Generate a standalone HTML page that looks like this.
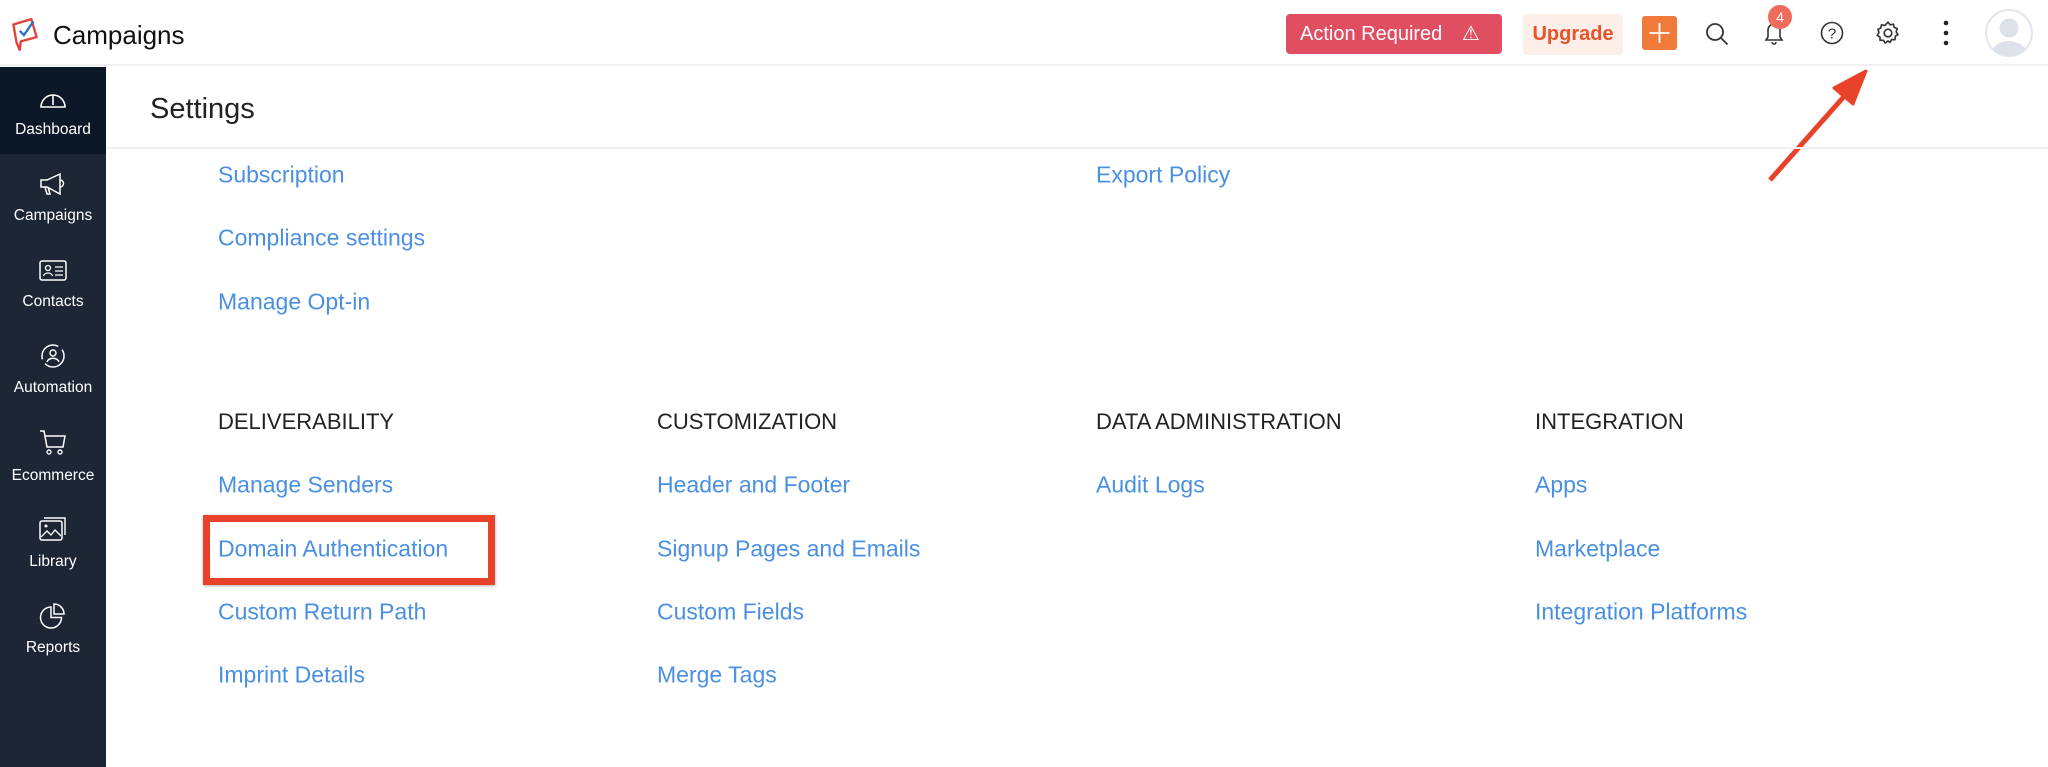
<!DOCTYPE html>
<html><head><meta charset="utf-8"><style>
*{margin:0;padding:0;box-sizing:border-box}
body{width:2048px;height:767px;background:#fff;font-family:"Liberation Sans",sans-serif;position:relative;overflow:hidden}
.hdr{position:absolute;left:0;top:0;width:2048px;height:66px;background:#fff;border-bottom:2px solid #eef0f2}
.side{position:absolute;left:0;top:67px;width:106px;height:700px;background:#1c2635}
.side .act{position:absolute;left:0;top:0;width:106px;height:87px;background:#0c1727}
.si{position:absolute;left:0;width:106px;text-align:center;color:#fff;font-size:15.5px}
.si svg{display:block;margin:0 auto 10px}
.a{position:absolute;color:#4a90e2;font-size:23px;white-space:nowrap;transform:translateY(-50%)}
.h{position:absolute;color:#222;font-size:22px;white-space:nowrap;transform:translateY(-50%)}
.abs{position:absolute}
</style></head><body>
<div class="hdr"></div>
<svg class="abs" style="left:7px;top:16px" width="36" height="36" viewBox="0 0 28 34"><path d="M3 8 L20 3 L25 20 L10 24 L9 32 L6 25 Z" fill="none" stroke="#e0423a" stroke-width="2.2" stroke-linejoin="round"/><path d="M9 14 L13 18 L22 5" fill="none" stroke="#2f6fc4" stroke-width="2.2"/></svg>
<div class="abs" style="left:53px;top:20px;font-size:26px;color:#111">Campaigns</div>

<div class="abs" style="left:1286px;top:14px;width:216px;height:40px;background:#e04e62;border-radius:4px;color:#fff;font-size:20px;line-height:40px;padding-left:14px;white-space:nowrap">Action Required <span style="margin-left:14px">⚠</span></div>
<div class="abs" style="left:1523px;top:14px;width:100px;height:41px;background:#fcefe9;border-radius:4px;color:#e8532a;font-size:20px;font-weight:bold;line-height:41px;text-align:center">Upgrade</div>
<div class="abs" style="left:1642px;top:16px;width:35px;height:34px;background:#ef7a3a;border-radius:3px"></div>
<svg class="abs" style="left:1642px;top:16px" width="35" height="34"><path d="M17.5 7v20M7.5 17h20" stroke="#fff" stroke-width="1.8"/></svg>
<svg class="abs" style="left:1703px;top:20px" width="28" height="28"><circle cx="12" cy="12" r="8" fill="none" stroke="#333" stroke-width="1.8"/><path d="M17.5 17.5l7 7" stroke="#333" stroke-width="1.8"/></svg>
<svg class="abs" style="left:1761px;top:18px" width="26" height="30"><path d="M5 22h16l-2-3v-7a6 6 0 0 0-12 0v7z" fill="none" stroke="#333" stroke-width="1.6"/><path d="M11 24a2 2 0 0 0 4 0" fill="none" stroke="#333" stroke-width="1.5"/></svg>
<div class="abs" style="left:1768px;top:5px;width:24px;height:24px;border-radius:50%;background:#ee6b5e;color:#fff;font-size:14px;text-align:center;line-height:24px">4</div>
<svg class="abs" style="left:1819px;top:20px" width="26" height="26"><circle cx="13" cy="13" r="10.5" fill="none" stroke="#333" stroke-width="1.6"/><text x="13" y="18.5" font-size="15" text-anchor="middle" fill="#333" font-family="Liberation Sans">?</text></svg>
<svg class="abs" style="left:1875px;top:20px" width="26" height="26" viewBox="0 0 24 24"><path d="M12 2l2 2.5 3-.7.7 3 2.8 1.2-1 2.9 1.7 2.6-2.6 1.6-.1 3.1-3.1-.1-1.6 2.6L12 19.3 9.4 21.3 7.8 18.7l-3.1.1-.1-3.1L2 14.1l1.7-2.6-1-2.9L5.3 7.4l.7-3 3 .7z" fill="none" stroke="#333" stroke-width="1.5" stroke-linejoin="round"/><circle cx="12" cy="12" r="3.5" fill="none" stroke="#333" stroke-width="1.5"/></svg>
<svg class="abs" style="left:1939px;top:18px" width="14" height="30"><circle cx="7" cy="5" r="2.3" fill="#222"/><circle cx="7" cy="15" r="2.3" fill="#222"/><circle cx="7" cy="25" r="2.3" fill="#222"/></svg>
<svg class="abs" style="left:1985px;top:9px" width="48" height="48"><defs><clipPath id="c"><circle cx="24" cy="24" r="23"/></clipPath></defs><circle cx="24" cy="24" r="23" fill="#fff" stroke="#e3e6ea" stroke-width="2"/><g clip-path="url(#c)" fill="#dde2ea"><circle cx="24" cy="19" r="9.5"/><ellipse cx="24" cy="46" rx="18" ry="14"/></g></svg>

<svg class="abs" style="left:0;top:0" width="2048" height="767"><path d="M1770 180 L1848 92" stroke="#e8432a" stroke-width="5"/><path d="M1866 71 L1834 88 L1853 104 Z" fill="#e8432a" stroke="#e8432a" stroke-width="3" stroke-linejoin="round"/></svg>

<div class="side"><div class="act"></div>
<div class="si" style="top:18px"><svg width="30" height="26"><path d="M3 22a12 12 0 1 1 24 0z" fill="none" stroke="#fff" stroke-width="1.6"/><path d="M15 10v10" stroke="#fff" stroke-width="1.6"/></svg>Dashboard</div>
<div class="si" style="top:104px"><svg width="30" height="26"><path d="M3 9h6l13-6v20L9 16H3z M7 16l2 7h3l-2-7" fill="none" stroke="#fff" stroke-width="1.5"/><path d="M22 9a3 3 0 0 1 0 7" fill="none" stroke="#fff" stroke-width="1.4"/></svg>Campaigns</div>
<div class="si" style="top:190px"><svg width="30" height="26"><rect x="2" y="4" width="26" height="19" rx="2" fill="none" stroke="#fff" stroke-width="1.5"/><circle cx="10" cy="11" r="2.5" fill="none" stroke="#fff" stroke-width="1.3"/><path d="M5.5 19c1-4 8-4 9 0M17 10h8M17 14h8M17 18h8" fill="none" stroke="#fff" stroke-width="1.3"/></svg>Contacts</div>
<div class="si" style="top:276px"><svg width="30" height="26"><circle cx="15" cy="13" r="11" fill="none" stroke="#fff" stroke-width="1.5" stroke-dasharray="26 5"/><circle cx="15" cy="10" r="3" fill="none" stroke="#fff" stroke-width="1.4"/><path d="M9 19c2-5 10-5 12 0" fill="none" stroke="#fff" stroke-width="1.4"/></svg>Automation</div>
<div class="si" style="top:362px"><svg width="30" height="28"><path d="M2 2h4l3 16h16l2-11H7" fill="none" stroke="#fff" stroke-width="1.5"/><circle cx="11" cy="23" r="2" fill="none" stroke="#fff" stroke-width="1.4"/><circle cx="22" cy="23" r="2" fill="none" stroke="#fff" stroke-width="1.4"/></svg>Ecommerce</div>
<div class="si" style="top:448px"><svg width="30" height="28"><rect x="2" y="6" width="22" height="19" rx="2" fill="none" stroke="#fff" stroke-width="1.5"/><path d="M6 3h21v17" fill="none" stroke="#fff" stroke-width="1.4"/><path d="M3 22l6-6 4 4 4-5 6 6" fill="none" stroke="#fff" stroke-width="1.4"/><circle cx="8" cy="11" r="1.5" fill="#fff"/></svg>Library</div>
<div class="si" style="top:534px"><svg width="30" height="28"><path d="M13 6a10.5 10.5 0 1 0 10.5 10.5H13z" fill="none" stroke="#fff" stroke-width="1.5"/><path d="M16 3a10 10 0 0 1 10 10H16z" fill="none" stroke="#fff" stroke-width="1.5"/></svg>Reports</div>
</div>

<div class="abs" style="left:150px;top:93px;font-size:29px;color:#222">Settings</div>
<div class="abs" style="left:106px;top:147px;width:1942px;height:2px;background:#f0f1f3"></div>

<div class="a" style="left:218px;top:175px">Subscription</div>
<div class="a" style="left:218px;top:238px">Compliance settings</div>
<div class="a" style="left:218px;top:302px">Manage Opt-in</div>
<div class="a" style="left:1096px;top:175px">Export Policy</div>

<div class="h" style="left:218px;top:422px">DELIVERABILITY</div>
<div class="h" style="left:657px;top:422px">CUSTOMIZATION</div>
<div class="h" style="left:1096px;top:422px">DATA ADMINISTRATION</div>
<div class="h" style="left:1535px;top:422px">INTEGRATION</div>

<div class="a" style="left:218px;top:485px">Manage Senders</div>
<div class="a" style="left:218px;top:549px">Domain Authentication</div>
<div class="a" style="left:218px;top:612px">Custom Return Path</div>
<div class="a" style="left:218px;top:675px">Imprint Details</div>

<div class="a" style="left:657px;top:485px">Header and Footer</div>
<div class="a" style="left:657px;top:549px">Signup Pages and Emails</div>
<div class="a" style="left:657px;top:612px">Custom Fields</div>
<div class="a" style="left:657px;top:675px">Merge Tags</div>

<div class="a" style="left:1096px;top:485px">Audit Logs</div>

<div class="a" style="left:1535px;top:485px">Apps</div>
<div class="a" style="left:1535px;top:549px">Marketplace</div>
<div class="a" style="left:1535px;top:612px">Integration Platforms</div>

<div class="abs" style="left:203px;top:515px;width:292px;height:70px;border:7px solid #e8432a;box-shadow:0 1px 3px rgba(0,0,0,.3)"></div>
</body></html>
